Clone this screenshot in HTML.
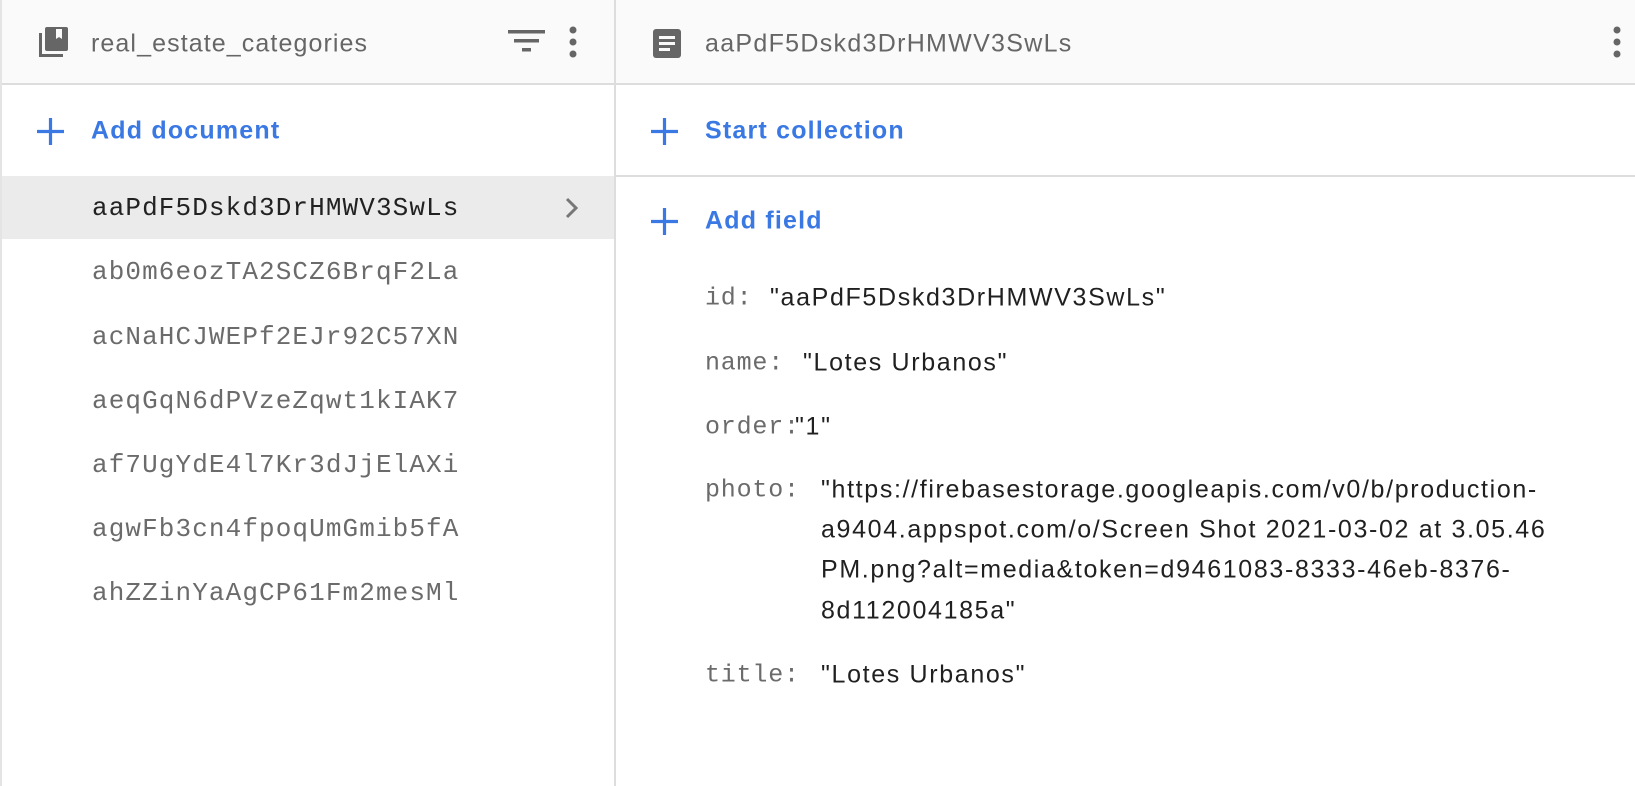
<!DOCTYPE html>
<html><head><meta charset="utf-8"><style>
*{margin:0;padding:0;box-sizing:border-box}
body{width:1635px;height:786px;background:#fff;position:relative;overflow:hidden;font-family:"Liberation Sans",sans-serif}
.abs{position:absolute;white-space:nowrap}
.hdr{position:absolute;top:0;height:85px;background:#fafafa;border-bottom:2px solid #ddd}
.mono{font-family:"Liberation Mono",monospace;font-size:26px;letter-spacing:1.1px;color:#6b6b6b}
.lbl{font-family:"Liberation Mono",monospace;font-size:25px;letter-spacing:0.8px;color:#6b6b6b}
.blue{color:#3a78e3;font-size:25px;font-weight:bold;letter-spacing:1.2px}
.val{font-size:25px;color:#202020;letter-spacing:1.65px}
.t{transform:translateY(-50%)}
</style></head><body>
<div class="hdr" style="left:0;width:1635px"></div>
<div style="position:absolute;left:614px;top:0;width:2px;height:786px;background:#ddd"></div>
<div style="position:absolute;left:0;top:0;width:2px;height:786px;background:#e4e4e4"></div>
<div style="position:absolute;left:616px;top:175px;width:1019px;height:2px;background:#ddd"></div>
<div style="position:absolute;left:2px;top:176px;width:612px;height:63px;background:#ebebeb"></div>

<svg class="abs" style="left:36px;top:25px" width="34" height="36" viewBox="0 0 34 36"><path d="M3 8v24h24v-3H6V8z" fill="#666"/><rect x="9" y="2" width="23" height="24" rx="2" fill="#666"/><path d="M20 4v10l3-2 3 2V4z" fill="#fafafa"/></svg>
<div class="abs t" style="left:91px;top:44px;font-size:25px;letter-spacing:1.1px;color:#666">real_estate_categories</div>
<svg class="abs" style="left:508px;top:30px" width="38" height="26" viewBox="0 0 38 26"><rect x="0" y="0" width="37" height="3.5" fill="#666"/><rect x="6" y="9" width="25" height="3.5" fill="#666"/><rect x="14" y="18" width="9" height="3.5" fill="#666"/></svg>
<svg class="abs" style="left:566px;top:25px" width="14" height="36"><circle cx="7" cy="5" r="3.5" fill="#666"/><circle cx="7" cy="17" r="3.5" fill="#666"/><circle cx="7" cy="29" r="3.5" fill="#666"/></svg>

<svg class="abs" style="left:652px;top:28px" width="32" height="32" viewBox="0 0 32 32"><rect x="1" y="1" width="28" height="29" rx="3" fill="#666"/><rect x="7" y="8" width="16" height="3" fill="#fafafa"/><rect x="7" y="14" width="16" height="3" fill="#fafafa"/><rect x="7" y="20" width="11" height="3" fill="#fafafa"/></svg>
<div class="abs t" style="left:705px;top:44px;font-size:25px;letter-spacing:1.3px;color:#666">aaPdF5Dskd3DrHMWV3SwLs</div>
<svg class="abs" style="left:1610px;top:25px" width="14" height="36"><circle cx="7" cy="5" r="3.5" fill="#666"/><circle cx="7" cy="17" r="3.5" fill="#666"/><circle cx="7" cy="29" r="3.5" fill="#666"/></svg>

<svg class="abs" style="left:36px;top:117px" width="29" height="29"><path d="M14.5 1v27M1 14.5h27" stroke="#3a78e3" stroke-width="3.2"/></svg>
<div class="abs t blue" style="left:91px;top:131px">Add document</div>
<svg class="abs" style="left:650px;top:117px" width="29" height="29"><path d="M14.5 1v27M1 14.5h27" stroke="#3a78e3" stroke-width="3.2"/></svg>
<div class="abs t blue" style="left:705px;top:131px">Start collection</div>
<svg class="abs" style="left:650px;top:207px" width="29" height="29"><path d="M14.5 1v27M1 14.5h27" stroke="#3a78e3" stroke-width="3.2"/></svg>
<div class="abs t blue" style="left:705px;top:221px">Add field</div>

<div class="abs t mono" style="left:92px;top:208px;color:#222">aaPdF5Dskd3DrHMWV3SwLs</div>
<svg class="abs" style="left:564px;top:196px" width="16" height="24"><path d="M3 3l9 9-9 9" stroke="#777" stroke-width="3" fill="none"/></svg>
<div class="abs t mono" style="left:92px;top:272px">ab0m6eozTA2SCZ6BrqF2La</div>
<div class="abs t mono" style="left:92px;top:337px">acNaHCJWEPf2EJr92C57XN</div>
<div class="abs t mono" style="left:92px;top:401px">aeqGqN6dPVzeZqwt1kIAK7</div>
<div class="abs t mono" style="left:92px;top:465px">af7UgYdE4l7Kr3dJjElAXi</div>
<div class="abs t mono" style="left:92px;top:529px">agwFb3cn4fpoqUmGmib5fA</div>
<div class="abs t mono" style="left:92px;top:593px">ahZZinYaAgCP61Fm2mesMl</div>

<div class="abs t lbl" style="left:705px;top:298px">id:</div>
<div class="abs t val" style="left:770px;top:298px">"aaPdF5Dskd3DrHMWV3SwLs"</div>
<div class="abs t lbl" style="left:705px;top:363px">name:</div>
<div class="abs t val" style="left:803px;top:363px">"Lotes Urbanos"</div>
<div class="abs t lbl" style="left:705px;top:427px">order:</div>
<div class="abs t val" style="left:795px;top:427px">"1"</div>
<div class="abs t lbl" style="left:705px;top:490px">photo:</div>
<div class="abs t val" style="left:821px;top:490px">"https://firebasestorage.googleapis.com/v0/b/production-</div>
<div class="abs t val" style="left:821px;top:530px">a9404.appspot.com/o/Screen Shot 2021-03-02 at 3.05.46</div>
<div class="abs t val" style="left:821px;top:570px">PM.png?alt=media&amp;token=d9461083-8333-46eb-8376-</div>
<div class="abs t val" style="left:821px;top:611px">8d112004185a"</div>
<div class="abs t lbl" style="left:705px;top:675px">title:</div>
<div class="abs t val" style="left:821px;top:675px">"Lotes Urbanos"</div>
</body></html>
